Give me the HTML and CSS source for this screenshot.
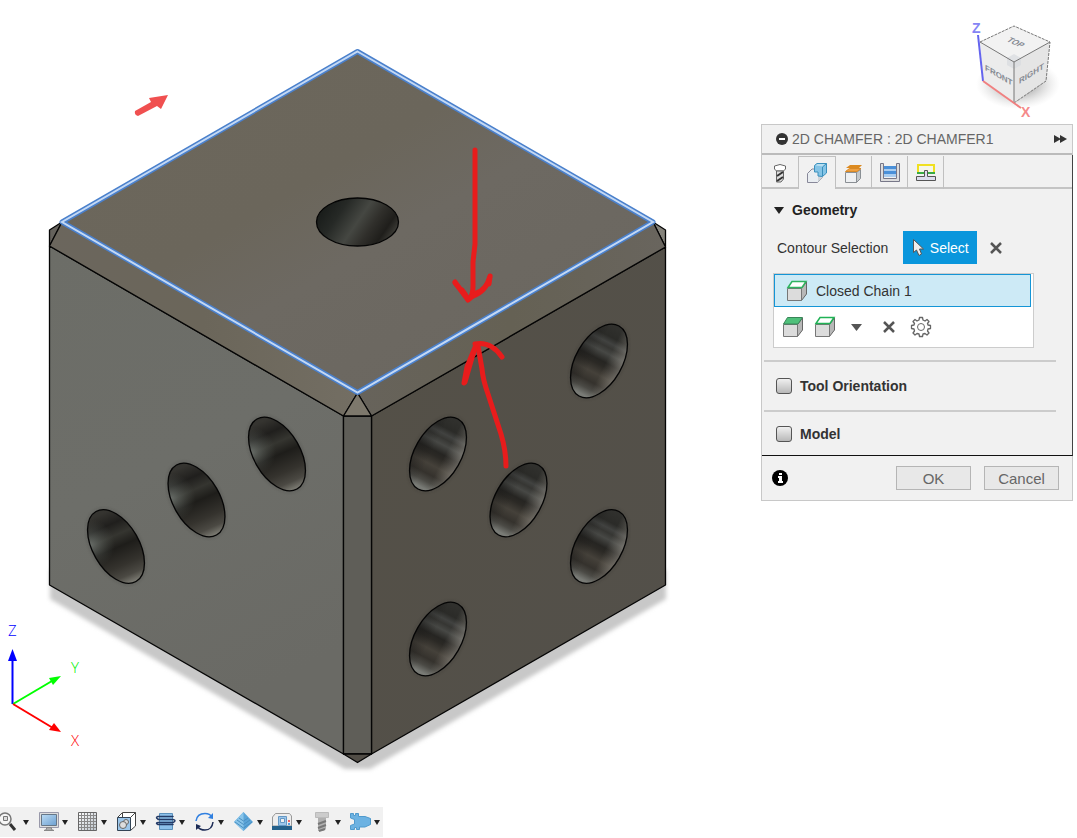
FILE: index.html
```html
<!DOCTYPE html>
<html lang="en">
<head>
    <meta charset="UTF-8">
    <meta name="viewport" content="width=device-width, initial-scale=1.0">
    <title>2D Chamfer</title>
    <link rel="stylesheet" href="styles.css">
</head>
<body>
    <div class="workspace">
        <main class="viewport">
            <svg class="scene" width="700" height="800" viewBox="0 0 700 800" role="img" aria-label="Chamfered die model">
                <defs>
                    <linearGradient id="topFace" x1="0" y1="0" x2="1" y2="1">
                        <stop offset="0" stop-color="#6c675c"/>
                        <stop offset="0.4" stop-color="#6b665b"/>
                        <stop offset="0.55" stop-color="#6d6962"/>
                        <stop offset="1" stop-color="#6a665f"/>
                    </linearGradient>
                    <linearGradient id="leftFace" x1="0" y1="0" x2="0.3" y2="1">
                        <stop offset="0" stop-color="#6c6d67"/>
                        <stop offset="0.5" stop-color="#6d6e69"/>
                        <stop offset="1" stop-color="#6a6a65"/>
                    </linearGradient>
                    <linearGradient id="rightFace" x1="0" y1="0" x2="1" y2="1">
                        <stop offset="0" stop-color="#545047"/>
                        <stop offset="1" stop-color="#53504a"/>
                    </linearGradient>
                    <linearGradient id="bevelLeft">
                        <stop offset="0" stop-color="#6b665d"/>
                        <stop offset="0.5" stop-color="#6b665a"/>
                        <stop offset="1" stop-color="#736e63"/>
                    </linearGradient>
                    <linearGradient id="bevelRight">
                        <stop offset="0" stop-color="#67635b"/>
                        <stop offset="0.5" stop-color="#656154"/>
                        <stop offset="1" stop-color="#69655e"/>
                    </linearGradient>
                    <linearGradient id="holeTop" x1="0" y1="0.3" x2="1" y2="0.7">
                        <stop offset="0" stop-color="#171a18"/>
                        <stop offset="0.25" stop-color="#262926"/>
                        <stop offset="0.5" stop-color="#454742"/>
                        <stop offset="0.68" stop-color="#302f2b"/>
                        <stop offset="0.85" stop-color="#1f1e1b"/>
                        <stop offset="1" stop-color="#45443e"/>
                    </linearGradient>
                    <linearGradient id="holeRight" gradientUnits="userSpaceOnUse" x1="17" y1="-33" x2="-17" y2="33">
                        <stop offset="0" stop-color="#30302d"/>
                        <stop offset="0.14" stop-color="#2b2b28"/>
                        <stop offset="0.22" stop-color="#414240"/>
                        <stop offset="0.28" stop-color="#363633"/>
                        <stop offset="0.36" stop-color="#474845"/>
                        <stop offset="0.48" stop-color="#262522"/>
                        <stop offset="0.54" stop-color="#2b2925"/>
                        <stop offset="0.67" stop-color="#45413a"/>
                        <stop offset="0.8" stop-color="#35322d"/>
                        <stop offset="0.9" stop-color="#4b4a45"/>
                        <stop offset="1" stop-color="#797b76"/>
                    </linearGradient>
                    <linearGradient id="holeShine" gradientUnits="userSpaceOnUse" x1="-22" y1="-12" x2="25" y2="12">
                        <stop offset="0" stop-color="#111" stop-opacity="0.4"/>
                        <stop offset="0.35" stop-color="#111" stop-opacity="0"/>
                        <stop offset="0.6" stop-color="#a09a90" stop-opacity="0"/>
                        <stop offset="1" stop-color="#b0aca4" stop-opacity="0.6"/>
                    </linearGradient>
                    <linearGradient id="holeLeft" gradientUnits="userSpaceOnUse" x1="-14" y1="-33" x2="16" y2="35">
                        <stop offset="0" stop-color="#353430"/>
                        <stop offset="0.18" stop-color="#201f1d"/>
                        <stop offset="0.34" stop-color="#353530"/>
                        <stop offset="0.5" stop-color="#1e1d1a"/>
                        <stop offset="0.75" stop-color="#35332e"/>
                        <stop offset="0.9" stop-color="#4b4943"/>
                        <stop offset="1" stop-color="#77766e"/>
                    </linearGradient>
                    <radialGradient id="holeGlint" gradientUnits="userSpaceOnUse" cx="-26" cy="-2" r="25">
                        <stop offset="0" stop-color="#7e8580" stop-opacity="0.7"/>
                        <stop offset="1" stop-color="#505550" stop-opacity="0"/>
                    </radialGradient>
                    <filter id="soft" x="-5%" y="-5%" width="110%" height="110%">
                        <feGaussianBlur stdDeviation="2"/>
                    </filter>
                    <g id="pipRight">
                        <path class="pip-halo" filter="url(#soft)" d="M20-35A40 23-60 0 1-20 35A40 23-60 0 1 20-35Z"/>
                        <path fill="url(#holeRight)" d="M20-35A40 23-60 0 1-20 35A40 23-60 0 1 20-35Z"/>
                        <path class="edge" fill="url(#holeShine)" d="M20-35A40 23-60 0 1-20 35A40 23-60 0 1 20-35Z"/>
                    </g>
                    <g id="pipLeft">
                        <path class="pip-halo" filter="url(#soft)" d="M-20-35A40 23 60 0 1 20 35A40 23 60 0 1-20-35Z"/>
                        <path fill="url(#holeLeft)" d="M-20-35A40 23 60 0 1 20 35A40 23 60 0 1-20-35Z"/>
                        <path class="edge" fill="url(#holeGlint)" d="M-20-35A40 23 60 0 1 20 35A40 23 60 0 1-20-35Z"/>
                    </g>
                </defs>

                <!-- ground shadow -->
                <path fill="#c8c8c8" filter="url(#soft)" d="M50 570V599L345 769H370L666 599V570Z"/>

                <!-- body -->
                <g class="edges">
                    <path fill="#65625c" d="M62 222L49.5 230V246Z"/>
                    <path fill="#85837b" d="M653 222L665.5 230V247Z"/>
                    <path fill="url(#leftFace)" d="M49.5 246L343.5 416V754L49.5 585Z"/>
                    <path fill="url(#rightFace)" d="M371.5 416L665.5 247V585L371.5 754Z"/>
                    <path fill="url(#bevelLeft)" d="M62 222L357.5 393L343.5 416L49.5 246Z"/>
                    <path fill="url(#bevelRight)" d="M653 222L357.5 393L371.5 416L665.5 247Z"/>
                    <path fill="#5f5e58" d="M343.5 416H371.5V754H343.5Z"/>
                    <path fill="#7d786c" d="M357.5 393L371.5 416H343.5Z"/>
                    <path fill="#514d46" d="M343.5 754H371.5L357.5 762.5Z"/>
                </g>
                <path class="chain" fill="url(#topFace)" d="M357.5 51.5L653 222L357.5 392.5L62 222Z"/>
                <path class="chain-core" d="M357.5 51.5L653 222L357.5 392.5L62 222Z"/>

                <ellipse class="edge" cx="357.500" cy="222" rx="41" ry="24" fill="url(#holeTop)"/>
                <use href="#pipLeft" x="277" y="454"/>
                <use href="#pipLeft" x="196.500" y="500"/>
                <use href="#pipLeft" x="116" y="546.500"/>
                <use href="#pipRight" x="599" y="361"/>
                <use href="#pipRight" x="438" y="454"/>
                <use href="#pipRight" x="518.500" y="500"/>
                <use href="#pipRight" x="599" y="546.500"/>
                <use href="#pipRight" x="438" y="639"/>

                <!-- markup arrows -->
                <g class="markup">
                    <path d="M475 150V244L473 262V286Q473 294 470 298"/>
                    <path d="M455 283L468 299Q464 292 462 290M473 296Q486 292 490 276"/>
                    <path d="M455 282L468 300L476 293Q487 289 490 277L489 284"/>
                    <path d="M506 466Q506 451 501 434L488 394Q483 380 482 369L478 346"/>
                    <path d="M464 383L467 367L476 345L471 361L465 382M475 344Q491 341 502 357"/>
                </g>
                <path fill="#f05050" d="M135 111L151 102L149 98L168 95L161 109L157 106L138 116Q134 115 135 111Z"/>

                <!-- axis triad -->
                <g class="triad">
                    <path stroke="#00f" d="M12.500 704V658"/>
                    <path fill="#00f" d="M12.500 649L17 661H8Z"/>
                    <path stroke="#0f0" d="M13 704L52 681"/>
                    <path fill="#0f0" d="M61 676L53 685L49 678Z"/>
                    <path stroke="#f00" d="M13 704L53 728"/>
                    <path fill="#f00" d="M61 732L49 730L54 723Z"/>
                </g>
                <g class="triad-labels">
                    <text x="8" y="636" fill="#0000ff">Z</text>
                    <text x="71" y="673" fill="#00f000">Y</text>
                    <text x="71" y="746" fill="#ff0000">X</text>
                </g>
            </svg>
        </main>

        <aside class="side">
            <svg class="view-cube" width="110" height="124" viewBox="960 0 110 124" role="img" aria-label="View cube">
                <defs>
                    <radialGradient id="cubeShadow">
                        <stop offset="0.3" stop-color="#888" stop-opacity="0.7"/>
                        <stop offset="1" stop-color="#ccc" stop-opacity="0"/>
                    </radialGradient>
                </defs>
                <ellipse cx="1018" cy="84" rx="42" ry="25" fill="url(#cubeShadow)"/>
                <path fill="#f2f2f2" d="M980 42L1014 26L1050 42L1014 62Z"/>
                <path fill="#ececec" d="M980 42L1014 62V103L983 81Z"/>
                <path fill="#e5e5e5" d="M1014 62L1050 42L1046 81L1014 103Z"/>
                <path fill="#d9dce0" d="M1014 54L1021 58V65L1014 69L1007 65V58Z" opacity="0.7"/>
                <path class="cube-dash" d="M980 42L1014 26L1050 42L1046 81L1014 103"/>
                <path class="cube-edge" d="M980 42L1014 62L1050 42M1014 62V103"/>
                <path stroke="#6464ee" stroke-width="2" fill="none" d="M978 35L983 81"/>
                <path stroke="#f08080" stroke-width="2" fill="none" d="M983 81L1021 108"/>
                <g class="cube-labels">
                    <text transform="translate(985 70) skewY(30)">FRONT</text>
                    <text transform="translate(1019 84) skewY(-32)">RIGHT</text>
                    <text transform="translate(1006 41) rotate(24) skewX(-28)">TOP</text>
                </g>
                <text class="cube-axis" x="972" y="33" fill="#8585f5">Z</text>
                <text class="cube-axis" x="1021" y="117" fill="#f58a8a">X</text>
            </svg>

            <form class="panel" onsubmit="return false">
                <header class="panel-header">
                    <button type="button" class="plain" aria-label="Collapse">
                        <svg width="12" height="12" viewBox="0 0 12 12"><circle cx="6" cy="6" r="6" fill="#333"/><path fill="#fff" d="M3 5h6v2H3z"/></svg>
                    </button>
                    <h1>2D CHAMFER : 2D CHAMFER1</h1>
                    <button type="button" class="plain expand" aria-label="Expand">
                        <svg width="13" height="8" viewBox="0 0 13 8"><path fill="#333" d="M0 0L7 4L0 8ZM6 0L13 4L6 8Z"/></svg>
                    </button>
                </header>

                <div class="panel-main">
                    <div class="tabs" role="tablist">
                        <button type="button" role="tab" class="tab" aria-label="Tool">
                            <svg width="24" height="24" viewBox="0 0 24 24"><path fill="#fff" stroke="#666" d="M6.500 5Q12 2 17.500 5V8L15.500 10H8.500L6.500 8Z"/><path fill="#ddd" stroke="#666" d="M8.500 10H15.500V18L13 21H8.500Z"/><path stroke="#333" stroke-width="2" d="M15 11L9 15M15 16L9 20"/></svg>
                        </button>
                        <button type="button" role="tab" class="tab tab-active" aria-selected="true" aria-label="Geometry">
                            <svg width="24" height="24" viewBox="0 0 24 24"><path fill="#e9edf1" stroke="#889" d="M2.500 12.500L7 8H17V17L12.500 21.500H2.500Z"/><path fill="#cfd5da" d="M13 13L17 9V17L13 21Z"/><path fill="#85c4e6" stroke="#3a90bd" d="M9.500 4.500L12 2.500H21.500V12L17.500 15.500L13 15V11H9.500Z"/><path fill="#b7def0" d="M10.500 4.500L12.500 3H20.500L17.500 5.500Z"/><path stroke="#3a90bd" fill="none" d="M17.500 6V15M17.500 6L21.500 2.500"/></svg>
                        </button>
                        <button type="button" role="tab" class="tab" aria-label="Heights">
                            <svg width="24" height="24" viewBox="0 0 24 24"><path fill="#eef0f2" stroke="#8a8f94" d="M3.500 11.500H14.500V21.500H3.500Z"/><path fill="#c3c8cc" stroke="#8a8f94" d="M14.500 11.500L18.500 8.500V17.500L14.500 21.500Z"/><path fill="#f0a040" stroke="#d88a28" d="M3.500 10.500L7.500 7.500H19L15 10.500Z"/><path fill="#dc8a20" d="M4 7L8 4H20L17 7Z"/></svg>
                        </button>
                        <button type="button" role="tab" class="tab" aria-label="Passes">
                            <svg width="24" height="24" viewBox="0 0 24 24"><path fill="#4a90d9" d="M6 5h12v3H6zM6 10h12v3H6z"/><path fill="#a9cdf0" d="M6 8h12v2H6zM6 13h12v3H6z"/><path fill="#ddd" stroke="#778" d="M2.500 2.500H5.500V17.500H18.500V2.500H21.500V20.500H2.500Z"/></svg>
                        </button>
                        <button type="button" role="tab" class="tab" aria-label="Linking">
                            <svg width="24" height="24" viewBox="0 0 24 24"><path fill="#f6f6e8" stroke="#f0e020" stroke-width="2" d="M4 12V4H20V12"/><path stroke="#3aaa45" stroke-width="2" d="M3 12H10M14 12H21"/><path fill="#dde" stroke="#555" d="M2.500 15.500H10.500V9.500H13.500V15.500H21.500V19.500H2.500Z"/></svg>
                        </button>
                    </div>

                    <h2 class="section-title">
                        <svg width="10" height="7" viewBox="0 0 10 7"><path fill="#222" d="M0 0H10L5 7Z"/></svg>
                        Geometry
                    </h2>
                    <div class="contour-row">
                        <span id="contourLabel">Contour Selection</span>
                        <button type="button" class="select-button" aria-describedby="contourLabel">
                            <svg width="13" height="19" viewBox="0 0 13 19"><path fill="#eee" stroke="#555" d="M1.500 1.500V14.500L4.500 12L7 17.500L9.500 16L7.500 11H11.500Z"/></svg>
                            Select
                        </button>
                        <button type="button" class="plain" aria-label="Clear selection">
                            <svg width="12" height="12" viewBox="0 0 12 12"><path stroke="#555" stroke-width="2.500" d="M1 1L11 11M11 1L1 11"/></svg>
                        </button>
                    </div>

                    <div class="chains">
                        <button type="button" class="chain-item">
                            <svg width="22" height="22" viewBox="0 0 22 22"><path fill="#b8b8b8" stroke="#666" d="M15.500 8.500L20.500 2V14L15.500 20.500Z"/><path fill="#dcdcdc" stroke="#777" d="M1.500 8.500H15.500V20.500H1.500Z"/><path fill="#fff" stroke="#2eb460" stroke-width="1.500" d="M2 7.500L6 1.500H20L16 7.500Z"/></svg>
                            Closed Chain 1
                        </button>
                        <div class="chain-tools">
                            <button type="button" class="plain" aria-label="Face contours">
                                <svg width="22" height="22" viewBox="0 0 22 22"><path fill="#b8b8b8" stroke="#666" d="M15.500 8.500L20.500 2V14L15.500 20.500Z"/><path fill="#dcdcdc" stroke="#777" d="M1.500 8.500H15.500V20.500H1.500Z"/><path fill="#4fc07a" stroke="#398558" d="M1.500 8L5.500 1.500H20.500L16 8Z"/></svg>
                            </button>
                            <button type="button" class="plain" aria-label="Chain">
                                <svg width="22" height="22" viewBox="0 0 22 22"><path fill="#b8b8b8" stroke="#666" d="M15.500 8.500L20.500 2V14L15.500 20.500Z"/><path fill="#dcdcdc" stroke="#777" d="M1.500 8.500H15.500V20.500H1.500Z"/><path fill="#fff" stroke="#20b255" stroke-width="1.500" d="M2 7.500L6 1.500H20L16 7.500Z"/></svg>
                            </button>
                            <button type="button" class="plain" aria-label="More selection types">
                                <svg width="22" height="22" viewBox="0 0 22 22"><path fill="#555" d="M5 8H16L10.500 15Z"/></svg>
                            </button>
                            <button type="button" class="plain" aria-label="Remove chain">
                                <svg width="22" height="22" viewBox="0 0 22 22"><path stroke="#555" stroke-width="2.500" d="M6 6L16 16M16 6L6 16"/></svg>
                            </button>
                            <button type="button" class="plain" aria-label="Chain settings">
                                <svg width="22" height="22" viewBox="0 0 22 22" fill="none" stroke="#666"><path stroke-width="1.300" stroke-linejoin="round" d="M9 4L9.500 1.500H12.500L13 4L15 5L17 3.500L19 5.500L17.500 7.500L18 9L20.500 9.500V12.500L18 13L17.500 15L19 17L17 19L15 17.500L13 18L12.500 20.500H9.500L9 18L7 17.500L5 19L3 17L4.500 15L4 13L1.500 12.500V9.500L4 9L4.500 7.500L3 5.500L5 3.500L7 5Z"/><circle cx="11" cy="11" r="3.500"/></svg>
                            </button>
                        </div>
                    </div>

                    <div class="option">
                        <label><input type="checkbox"> Tool Orientation</label>
                    </div>
                    <div class="option">
                        <label><input type="checkbox"> Model</label>
                    </div>
                </div>

                <footer class="panel-footer">
                    <button type="button" class="plain info" aria-label="Info">
                        <svg width="16" height="16" viewBox="0 0 16 16"><circle cx="8" cy="8" r="8"/><path fill="#fff" d="M7 3h3v2H7zM6 6h4v5h1v2H6v-2h1V8H6z"/></svg>
                    </button>
                    <button type="submit" class="action">OK</button>
                    <button type="button" class="action">Cancel</button>
                </footer>
            </form>
        </aside>
    </div>

    <nav class="navbar" aria-label="Navigation">
        <button class="nav-item nav-first" aria-label="Zoom">
            <svg width="18" height="24" viewBox="5 0 18 24"><circle cx="10" cy="9" r="6" fill="#f6f6f6" stroke="#777" stroke-width="1.500"/><path stroke="#777" fill="#ddd" d="M8.500 6.500h4v4h-4z"/><path stroke="#333" stroke-width="3" d="M15 14L20 20"/></svg>
            <span class="caret"></span>
        </button>
        <button class="nav-item" aria-label="Display settings">
            <svg width="24" height="24" viewBox="0 0 24 24"><defs><linearGradient id="screen" x2="1" y2="1"><stop stop-color="#bcdcf5"/><stop offset="1" stop-color="#6c9fd0"/></linearGradient></defs><path fill="#ddd" stroke="#99a" d="M2.500 2.500H21.500V17.500H2.500Z"/><path fill="url(#screen)" stroke="#678" d="M4.500 4.500H19.500V15.500H4.500Z"/><path fill="#aaa" stroke="#888" d="M9.500 17.500H14.500V19.500L17 20.500H7L9.500 19.500Z"/></svg>
            <span class="caret"></span>
        </button>
        <button class="nav-item" aria-label="Grid and snaps">
            <svg width="24" height="24" viewBox="0 0 24 24"><defs><linearGradient id="gridFill" x2="1" y2="1"><stop stop-color="#fff"/><stop offset="1" stop-color="#bcc4cc"/></linearGradient></defs><path fill="url(#gridFill)" stroke="#666" d="M2.500 2.500H20.500V20.500H2.500Z"/><path stroke="#888" fill="none" d="M5.500 3V20M8.500 3V20M11.500 3V20M14.500 3V20M17.500 3V20M3 5.500H20M3 8.500H20M3 11.500H20M3 14.500H20M3 17.500H20"/></svg>
            <span class="caret"></span>
        </button>
        <button class="nav-item" aria-label="Viewports">
            <svg width="24" height="24" viewBox="0 0 24 24"><path fill="#fff" stroke="#444" d="M2.500 7.500L7.500 2.500H20.500V16L15.500 20.500"/><path fill="#9cc6ea" stroke="#345" d="M2.500 7.500H15.500V20.500H2.500Z"/><path stroke="#444" fill="none" d="M15.500 7.500L20.500 2.500M7.500 3V7"/><circle cx="11" cy="12" r="2.500" fill="#ddd" stroke="#666"/><circle cx="8" cy="15" r="3.500" fill="#ddd" stroke="#666"/></svg>
            <span class="caret"></span>
        </button>
        <button class="nav-item" aria-label="Passes display">
            <svg width="24" height="24" viewBox="0 0 24 24"><path fill="#8cc0ea" stroke="#5a90bb" d="M5.500 3.500H18.500V19.500H5.500Z"/><path fill="none" stroke="#233a66" stroke-width="1.500" stroke-linecap="round" d="M19 6.500H4Q1 7.500 4 9M4 9.500H19Q23 10.500 19 12.500H4Q1 13 4 14.500H19"/></svg>
            <span class="caret"></span>
        </button>
        <button class="nav-item" aria-label="Regenerate">
            <svg width="24" height="24" viewBox="0 0 24 24" fill="none" stroke-width="1.500"><path stroke="#2f7fe0" d="M3 11Q4 3.500 12 3.500Q17 3.500 19 7"/><path stroke="#1c2b55" d="M20 12Q19 20 12 20Q7 20 5 17"/><path fill="#2f7fe0" d="M20 3V9L15 8Z"/><path fill="#1c2b55" d="M3 20V14L8 16Z"/></svg>
            <span class="caret"></span>
        </button>
        <button class="nav-item" aria-label="Stock display">
            <svg width="24" height="24" viewBox="0 0 24 24"><path fill="#5aa4d8" d="M2 12L11.500 2L21 12L11.500 21Z"/><path fill="#89c5ea" d="M2 12L11.500 2V21Z"/><path fill="none" stroke="#4a90c2" d="M7 8L11.500 11L16 8M5 10L11.500 14.500L18 10M3 12L11.500 18L20 12"/></svg>
            <span class="caret"></span>
        </button>
        <button class="nav-item" aria-label="Machine display">
            <svg width="24" height="24" viewBox="0 0 24 24"><path fill="#eee" stroke="#999" d="M1.500 16V7L4.500 3.500H18.500L20.500 6V16Z"/><path fill="#24608a" d="M1 16H21V20H1Z"/><path fill="#9cc6ea" stroke="#6498c5" d="M7.500 6.500H15.500V15.500H7.500Z"/><path fill="#eee" stroke="#6498c5" d="M9.500 8.500H13.500V12.500H9.500Z"/><path fill="#e66" d="M17 10h2v2h-2z"/><path fill="#55a0e0" d="M17 13h2v2h-2z"/></svg>
            <span class="caret"></span>
        </button>
        <button class="nav-item" aria-label="Tool display">
            <svg width="24" height="24" viewBox="0 0 24 24"><path fill="#ccc" stroke="#bbb" d="M5.500 2.500H18.500V7.500H5.500Z"/><path fill="#b0b0b0" d="M8 8H16V19L13 21H8Z"/><path stroke="#777" stroke-width="2" d="M16 11L8 14M16 15L8 18M15 19L9 21"/></svg>
            <span class="caret"></span>
        </button>
        <button class="nav-item" aria-label="Holder display">
            <svg width="24" height="24" viewBox="0 0 24 24"><path fill="#6cb2e2" stroke="#4f9acd" d="M1.500 3.500H4.500V5.500H6.500V3.500H9.500V6.500H16L21.500 8.500V14.500L16 17H10.500V19.500H7.500V17.500H5.500V19.500H1.500V15.500L5.500 14V9.500L1.500 8Z"/></svg>
            <span class="caret"></span>
        </button>
    </nav>
</body>
</html>
```
FILE: styles.css
```css
* {
    box-sizing: border-box;
}

body {
    font-family: "Liberation Sans", Arial, sans-serif;
    font-size: 14px;
    color: #333;
    margin: 0;
    padding-bottom: 1px;
    height: 100vh;
    background-color: #fff;
    display: flex;
    flex-direction: column;
    overflow: hidden;
}

button {
    font-family: inherit;
    color: inherit;
    margin: 0;
    padding: 0;
    border: none;
    background: none;
}

svg {
    display: block;
    flex-shrink: 0;
}

.workspace {
    flex: 1;
    min-height: 0;
    display: flex;
    justify-content: space-between;
}

.viewport {
    flex: 1;
    min-width: 0;
}

/* Model */
.edges path,
.edge {
    stroke: #050505;
    stroke-width: 1.3;
    stroke-linejoin: round;
}

.pip-halo {
    fill: #222;
    opacity: 0.4;
}

.chain {
    stroke: #4a80cc;
    stroke-width: 5;
    stroke-linejoin: round;
}

.chain-core {
    fill: none;
    stroke: #c3d8f4;
    stroke-width: 2;
}

.markup path {
    fill: none;
    stroke: #e81c1c;
    stroke-width: 5;
    stroke-linecap: round;
    stroke-linejoin: round;
}

.triad path {
    stroke-width: 2;
}

.triad-labels text {
    font-family: "Open Sans", sans-serif;
    font-size: 15px;
    font-weight: 300;
}

/* View cube */
.side {
    width: 312px;
    margin-right: 4px;
    display: flex;
    flex-direction: column;
}

.view-cube {
    align-self: flex-end;
    margin-right: 3px;
}

.cube-edge,
.cube-dash {
    fill: none;
    stroke: #777;
}

.cube-dash {
    stroke-dasharray: 3 1;
}

.cube-labels text {
    font-family: "Liberation Sans Narrow", "Liberation Sans", sans-serif;
    font-size: 8px;
    font-weight: bold;
    fill: #858a92;
}

.cube-axis {
    font-size: 14px;
    font-weight: bold;
}

/* Panel */
.panel {
    background-color: #f1f1f1;
    border: 1px solid #c8c8c8;
    color: #333;
}

.panel-header {
    display: flex;
    align-items: center;
    gap: 4px;
    height: 30px;
    padding: 0 5px 0 14px;
    border-bottom: 2px solid #bbb;
}

.panel-header h1 {
    flex: 1;
    margin: 0;
    font-size: 14px;
    font-weight: normal;
    color: #666;
}

.panel-main {
    margin-right: -1px;
    border-right: 1px solid #444;
    border-bottom: 1px solid #111;
}

.tabs {
    display: flex;
    height: 34px;
    background: linear-gradient(#c4c4c4, #c4c4c4) bottom / 100% 2px no-repeat;
}

.tab {
    display: flex;
    align-items: center;
    justify-content: center;
    width: 36px;
    margin-top: 1px;
    border-right: 1px solid #c0c0c0;
}

.tab-active {
    background-color: #f1f1f1;
    border-top: 1px solid #c0c0c0;
}

.tab:first-child,
.tab-active {
    width: 37px;
}

.section-title {
    display: flex;
    align-items: center;
    gap: 8px;
    height: 42px;
    margin: 0;
    padding-left: 12px;
    font-size: 14px;
    color: #222;
}

.contour-row {
    display: flex;
    align-items: center;
    height: 33px;
    padding-left: 15px;
}

.select-button {
    display: flex;
    align-items: center;
    justify-content: center;
    gap: 5px;
    width: 74px;
    height: 33px;
    margin: 0 13px 0 15px;
    background-color: #0a96dc;
    color: #fff;
    font-size: 14px;
}

.chains {
    margin: 9px 38px 12px 11px;
    background-color: #fff;
    border: 1px solid #ccc;
}

.chain-item {
    display: flex;
    align-items: center;
    gap: 8px;
    width: calc(100% - 2px);
    height: 33px;
    padding-left: 11px;
    background-color: #cdeaf6;
    border: 1px solid #1495d6;
    font-size: 14px;
}

.chain-tools {
    display: flex;
    align-items: center;
    gap: 10px;
    height: 40px;
    padding: 0 8px;
}

.option {
    display: flex;
    align-items: center;
    height: 50px;
    margin: 0 16px 0 2px;
    padding-left: 12px;
    border-top: 2px solid #ccc;
}

.option:last-child {
    height: 45px;
}

.option label {
    display: flex;
    align-items: center;
    gap: 8px;
    font-weight: bold;
}

.option input {
    appearance: none;
    width: 16px;
    height: 16px;
    margin: 0;
    border: 1px solid #555;
    border-radius: 3px;
    background: linear-gradient(#f0f0f0, #b8b8b8);
}

.panel-footer {
    display: flex;
    align-items: center;
    gap: 13px;
    height: 44px;
    padding: 0 13px 0 10px;
}

.info {
    margin-right: auto;
}

.action {
    width: 75px;
    height: 24px;
    border: 1px solid #b5b5b5;
    background-color: #e8e8e8;
    color: #666;
    font-size: 15px;
}

/* Bottom toolbar */
.navbar {
    display: flex;
    align-self: flex-start;
    height: 30px;
    padding-right: 3px;
    background-color: #f1f1f1;
}

.nav-item {
    display: flex;
    align-items: center;
    justify-content: flex-end;
    gap: 1px;
    width: 39px;
}

.nav-first {
    width: 29px;
    justify-content: space-between;
}

.caret {
    border: 3px solid transparent;
    border-top: 5px solid #222;
    border-bottom: none;
}
```
